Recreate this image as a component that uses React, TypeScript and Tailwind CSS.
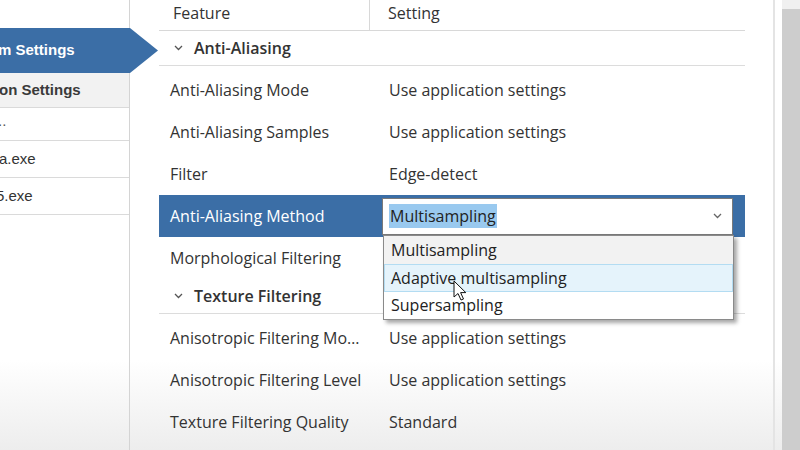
import React from 'react';

const Chevron = ({ className = '' }: { className?: string }) => (
  <svg width="9" height="6" viewBox="0 0 9 6" className={className}>
    <path d="M1 1 L4.5 4.5 L8 1" fill="none" stroke="currentColor" strokeWidth="1.3" />
  </svg>
);

const Cursor = () => (
  <svg width="14" height="22" viewBox="0 0 14 22" className="absolute left-[68px] top-[15px]">
    <path d="M1 1 L1 17 L5 13.5 L8 20 L10.5 19 L7.6 12.6 L12.8 12.6 Z" fill="#fff" stroke="#111" strokeWidth="1" strokeLinejoin="round" />
  </svg>
);

const SideNav = () => (
  <div className="relative z-10 w-[130px] shrink-0 border-r border-[#d4d4d4] font-['Liberation_Sans',Arial,sans-serif] text-[15px]">
    <div className="h-[28px]" />
    <div
      className="flex h-[45px] w-[158px] items-center bg-[#3b6ea6] font-bold text-white"
      style={{ clipPath: 'polygon(0 0, 130px 0, 158px 50%, 130px 100%, 0 100%)' }}
    >
      <span className="-ml-[2px]">m Settings</span>
    </div>
    <div className="flex h-[35px] items-center border-b border-[#dadada] bg-[#f2f2f2] font-bold text-[#3a3a3a]">
      <span className="-ml-[1px]">on Settings</span>
    </div>
    <div className="flex h-[33px] items-center border-b border-[#dadada] text-[#555]">
      <span className="-ml-[2px] pb-[6px]">..</span>
    </div>
    <div className="flex h-[37px] items-center border-b border-[#dadada] text-[#333]">
      <span className="-ml-[1px]">a.exe</span>
    </div>
    <div className="flex h-[37px] items-center border-b border-[#dadada] text-[#333]">
      <span className="-ml-[4px]">5.exe</span>
    </div>
  </div>
);

const Row = ({ name, value }: { name: string; value: string }) => (
  <div className="flex h-[42px] items-center text-[#333]">
    <div className="w-[211px] shrink-0 truncate pl-[11px] pr-[6px]">{name}</div>
    <div className="pl-[19px]">{value}</div>
  </div>
);

const Group = ({ title }: { title: string }) => (
  <div className="flex h-[35px] items-center border-b border-[#dcdcdc] pl-[15px] text-[#333]">
    <Chevron className="text-[#555]" />
    <span className="ml-[11px] font-semibold">{title}</span>
  </div>
);

const MethodRow = () => (
  <div className="relative flex h-[42px] items-center bg-[#3b6ea6] text-white">
    <div className="w-[211px] shrink-0 pl-[11px]">Anti-Aliasing Method</div>
    <div className="relative ml-[12px] flex h-[37px] w-[351px] items-center justify-between border border-[#7a7a7a] bg-white pl-[6px] pr-[10px]">
      <span className="bg-[#99c9ef] px-[1px] leading-[24px] text-[#222]">Multisampling</span>
      <Chevron className="text-[#666]" />
      <div className="absolute left-[0px] top-[36px] z-20 w-[351px] border border-[#8a8a8a] bg-white text-[#222] shadow-[3px_3px_4px_rgba(0,0,0,0.35)]">
        <div className="flex h-[28px] items-center bg-[#f2f2f2] pl-[7px]">Multisampling</div>
        <div className="relative flex h-[28px] items-center border border-[#b3dcf2] bg-[#e5f3fb] pl-[6px]">
          Adaptive multisampling
          <Cursor />
        </div>
        <div className="flex h-[27px] items-center pl-[7px]">Supersampling</div>
      </div>
    </div>
  </div>
);

export default function App() {
  return (
    <div className="flex h-[450px] w-[800px] overflow-hidden bg-gradient-to-b from-white from-80% to-[#ededed] font-['Segoe_UI','Open_Sans',sans-serif] text-[16px]">
      <SideNav />
      <div className="ml-[29px] w-[586px] shrink-0">
        <div className="flex h-[31px] items-center border-b border-[#d8d8d8] text-[#333]">
          <div className="w-[211px] shrink-0 self-stretch border-r border-[#d8d8d8] pl-[14px] leading-[26px]">Feature</div>
          <div className="self-stretch pl-[18px] leading-[26px]">Setting</div>
        </div>
        <Group title="Anti-Aliasing" />
        <div className="pt-[3px]">
          <Row name="Anti-Aliasing Mode" value="Use application settings" />
          <Row name="Anti-Aliasing Samples" value="Use application settings" />
          <Row name="Filter" value="Edge-detect" />
          <MethodRow />
          <Row name="Morphological Filtering" value="" />
        </div>
        <Group title="Texture Filtering" />
        <div className="pt-[3px]">
          <Row name="Anisotropic Filtering Mode" value="Use application settings" />
          <Row name="Anisotropic Filtering Level" value="Use application settings" />
          <Row name="Texture Filtering Quality" value="Standard" />
        </div>
      </div>
      <div className="w-[28px] shrink-0" />
      <div className="w-[2px] shrink-0 bg-[#e4e4e4]" />
      <div className="w-[7px] shrink-0" />
      <div className="flex w-[18px] shrink-0 flex-col">
        <div className="h-[9px] bg-[#f0f0f0]" />
        <div className="flex-1 bg-[#cdcdcd]" />
      </div>
    </div>
  );
}
